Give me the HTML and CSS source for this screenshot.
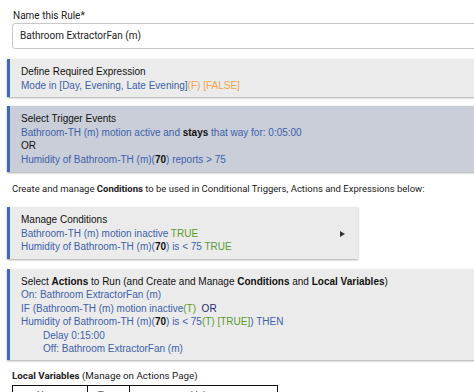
FILE: index.html
```html
<!DOCTYPE html>
<html lang="en">
<head>
    <meta charset="UTF-8">
    <meta name="viewport" content="width=device-width, initial-scale=1.0">
    <title>Rule Machine</title>
    <link rel="stylesheet" href="styles.css">
</head>
<body>
    <div class="page">
        <!-- Rule name -->
        <label class="field-label">Name this Rule*</label>
        <div class="name-input">Bathroom ExtractorFan (m)</div>

        <!-- Required expression -->
        <div class="rule-box">
            <div class="dark">Define Required Expression</div>
            <div class="blue">Mode in [Day, Evening, Late Evening]<span class="orange">(F) [FALSE]</span></div>
        </div>

        <!-- Triggers -->
        <div class="rule-box trigger">
            <div class="dark">Select Trigger Events</div>
            <div class="blue">Bathroom-TH (m) motion active and <b class="dark">stays</b> that way for: 0:05:00</div>
            <div class="dark">OR</div>
            <div class="blue">Humidity of Bathroom-TH (m)(<b class="dark">70</b>) reports &gt; 75</div>
        </div>

        <p class="note">Create and manage <b>Conditions</b> to be used in Conditional Triggers, Actions and Expressions below:</p>

        <!-- Conditions -->
        <div class="rule-box conditions">
            <div class="dark">Manage Conditions</div>
            <div class="blue">Bathroom-TH (m) motion inactive <span class="green">TRUE</span></div>
            <div class="blue">Humidity of Bathroom-TH (m)(<b class="dark">70</b>) is &lt; 75 <span class="green">TRUE</span></div>
            <span class="arrow"></span>
        </div>

        <!-- Actions -->
        <div class="rule-box actions">
            <div class="dark">Select <b>Actions</b> to Run (and Create and Manage <b>Conditions</b> and <b>Local Variables</b>)</div>
            <div class="blue">On: Bathroom ExtractorFan (m)</div>
            <div class="blue">IF (Bathroom-TH (m) motion inactive<span class="green">(T)</span> <span class="navy">&nbsp;OR</span></div>
            <div class="blue">Humidity of Bathroom-TH (m)(<b class="dark">70</b>) is &lt; 75<span class="green">(T) [TRUE]</span>) THEN</div>
            <div class="blue indent">Delay 0:15:00</div>
            <div class="blue indent">Off: Bathroom ExtractorFan (m)</div>
        </div>

        <p class="note vars"><b>Local Variables</b> (Manage on Actions Page)</p>
        <table class="var-table">
            <tr>
                <th class="col-name">Name</th>
                <th class="col-type">Type</th>
                <th class="col-value">Value</th>
            </tr>
        </table>
    </div>
</body>
</html>
```

FILE: styles.css
```css
/* page layout */
html, body {
    margin: 0;
    overflow: hidden;
    background: #fff;
}

.page {
    width: 540px;
    padding: 9px 0 0 7px;
    font-family: Roboto, "Liberation Sans", Arial, sans-serif;
    font-size: 10px;
    color: #222;
}

.field-label {
    display: block;
    margin-left: 6px;
    line-height: 14px;
}

.name-input {
    margin: 0 0 10px 5px;
    height: 24px;
    line-height: 24px;
    padding-left: 7px;
    border: 1px solid #c8c8c8;
    border-radius: 3px;
    font-size: 10px;
    color: #222;
}

/* grey rule sections */
.rule-box {
    position: relative;
    background-color: #ebebeb;
    border-left: 3px solid #3d6cb3;
    padding: 6px 10px 5px 11px;
    margin-bottom: 9px;
    font-family: "Liberation Sans", Arial, sans-serif;
    font-size: 10px;
    line-height: 13.5px;
    box-shadow: 0 1px 2px rgba(0, 0, 0, 0.35);
}

.rule-box.trigger {
    background-color: #c9ced9;
    padding-top: 6px;
    padding-bottom: 6px;
}

.rule-box.conditions {
    width: 327px;
    padding-bottom: 5px;
    margin-bottom: 10px;
}

.rule-box.actions {
    padding-bottom: 4px;
}

.dark {
    color: #111;
}

.blue {
    color: #4061aa;
}

.navy {
    color: #1c2a6b;
}

.orange {
    color: #f2a54a;
}

.green {
    color: #5c9a2c;
}

.indent {
    padding-left: 22px;
}

.arrow {
    position: absolute;
    right: 13px;
    top: 24px;
    width: 0;
    height: 0;
    border-top: 3px solid transparent;
    border-bottom: 3px solid transparent;
    border-left: 5px solid #333;
}

.note {
    margin: 10px 0 11px 5px;
    font-size: 9.5px;
    line-height: 14px;
}

.note.vars {
    margin: 9px 0 2px 5px;
    font-size: 9.8px;
}

/* variables table */
.var-table {
    margin-left: 5px;
    border-collapse: collapse;
    table-layout: fixed;
    width: 266px;
}

.var-table th {
    border: 1px solid #111;
    font-weight: normal;
    color: #666;
    font-size: 10px;
    height: 16px;
    padding: 2px 0 0;
}

.col-name {
    width: 74px;
}

.col-type {
    width: 41px;
}
```
